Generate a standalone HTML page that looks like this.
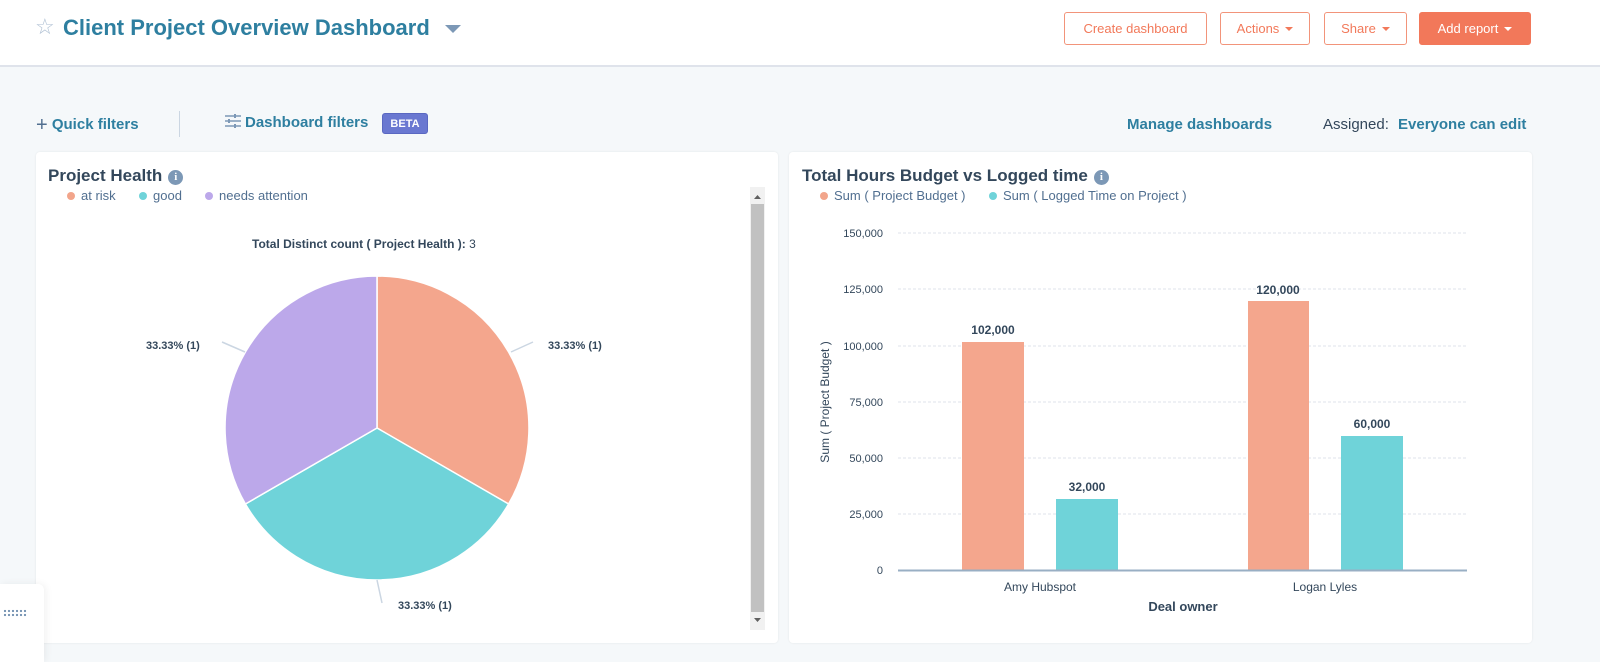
<!DOCTYPE html>
<html><head><style>
*{box-sizing:border-box;margin:0;padding:0}
body{width:1600px;height:662px;overflow:hidden;background:#f5f8fa;font-family:"Liberation Sans",sans-serif;position:relative;color:#33475b}
.hdr{position:absolute;left:0;top:0;width:1600px;height:67px;background:#fff;border-bottom:2px solid #dfe3eb}
.abs{position:absolute}
.btn{position:absolute;top:12px;height:33px;border:1px solid #f2947a;border-radius:3px;color:#f2795a;font-size:13px;display:flex;align-items:center;justify-content:center;background:#fff}
.car{display:inline-block;width:0;height:0;border-left:4px solid transparent;border-right:4px solid transparent;border-top:4px solid currentColor;margin-left:6px}
.link{color:#2e7fa0;font-weight:bold;font-size:15px}
.card{position:absolute;top:152px;height:491px;background:#fff;border-radius:4px;box-shadow:0 0 2px rgba(0,0,0,.08)}
.title{position:absolute;font-size:17px;font-weight:bold;color:#33475b}
.info{display:inline-block;width:15px;height:15px;border-radius:50%;background:#7c98b6;color:#fff;font-size:11px;font-weight:bold;text-align:center;line-height:15px;vertical-align:1px;margin-left:6px;font-family:"Liberation Serif",serif}
.leg{position:absolute;font-size:13px;color:#516f90}
.dot{display:inline-block;width:8px;height:8px;border-radius:50%;margin-right:6px}
</style></head><body>
<div class="hdr"></div>
<div class="abs" style="left:35px;top:14px;font-size:22px;color:#b0c1d4">☆</div>
<div class="abs" style="left:63px;top:15px;font-size:22px;font-weight:bold;color:#2e7fa0">Client Project Overview Dashboard</div>
<div class="abs" style="left:445px;top:25px;border-left:8px solid transparent;border-right:8px solid transparent;border-top:8px solid #7c98b6"></div>
<div class="btn" style="left:1064px;width:143px">Create dashboard</div>
<div class="btn" style="left:1220px;width:90px">Actions<span class="car"></span></div>
<div class="btn" style="left:1324px;width:83px">Share<span class="car"></span></div>
<div class="btn" style="left:1419px;width:112px;background:#f2785a;border-color:#f2785a;color:#fff">Add report<span class="car"></span></div>

<div class="abs link" style="left:36px;top:114px"><span style="font-weight:normal;font-size:20px;color:#516f90;vertical-align:-2px">+</span> Quick filters</div>
<div class="abs" style="left:179px;top:111px;width:1px;height:26px;background:#cbd6e2"></div>
<div class="abs link" style="left:225px;top:114px"><svg width="16" height="14" style="vertical-align:-1px;margin-right:4px"><g stroke="#7c98b6" stroke-width="1.5"><line x1="0" y1="2" x2="16" y2="2"/><line x1="0" y1="7" x2="16" y2="7"/><line x1="0" y1="12" x2="16" y2="12"/></g><g fill="#7c98b6"><rect x="9" y="0" width="2" height="4"/><rect x="3" y="5" width="2" height="4"/><rect x="9" y="10" width="2" height="4"/></g></svg>Dashboard filters</div>
<div class="abs" style="left:382px;top:113px;width:46px;height:21px;background:#6a78d1;border-radius:3px;color:#fff;font-size:11px;font-weight:bold;text-align:center;line-height:21px;border:1px solid #5a68c1">BETA</div>
<div class="abs link" style="left:1127px;top:116px">Manage dashboards</div>
<div class="abs" style="left:1323px;top:116px;font-size:15px;color:#33475b">Assigned:</div>
<div class="abs link" style="left:1398px;top:116px">Everyone can edit</div>

<div class="card" style="left:36px;width:742px"></div>
<div class="title" style="left:48px;top:166px">Project Health<span class="info">i</span></div>
<div class="leg" style="left:67px;top:188px"><span class="dot" style="background:#f2a58b"></span>at risk</div>
<div class="leg" style="left:139px;top:188px"><span class="dot" style="background:#6fd3d9"></span>good</div>
<div class="leg" style="left:205px;top:188px"><span class="dot" style="background:#bca8ea"></span>needs attention</div>
<div class="abs" style="left:252px;top:237px;font-size:12px;color:#33475b"><b>Total Distinct count ( Project Health ):</b> 3</div>
<svg class="abs" style="left:0;top:0" width="780" height="662">
<path d="M377 428 L377 276 A152 152 0 0 1 508.6 504 Z" fill="#f4a68d" stroke="#fff" stroke-width="1.5"/>
<path d="M377 428 L508.6 504 A152 152 0 0 1 245.4 504 Z" fill="#6fd3d9" stroke="#fff" stroke-width="1.5"/>
<path d="M377 428 L245.4 504 A152 152 0 0 1 377 276 Z" fill="#bca8ea" stroke="#fff" stroke-width="1.5"/>
<g stroke="#cbd6e2" stroke-width="1.5" fill="none"><path d="M511 352 L533 342"/><path d="M245 352 L222 342"/><path d="M377 580 L382 603"/></g>
<g font-size="11" font-weight="bold" fill="#33475b" font-family="Liberation Sans"><text x="548" y="349">33.33% (1)</text><text x="146" y="349">33.33% (1)</text><text x="398" y="609">33.33% (1)</text></g>
<rect x="750" y="187" width="15" height="443" fill="#f1f1f1"/><rect x="751" y="204" width="13" height="408" fill="#c1c1c1"/>
<path d="M754 199 L761 199 L757.5 195Z M754 618 L761 618 L757.5 622Z" fill="#606060"/>
</svg>
<div class="abs" style="left:0;top:584px;width:44px;height:78px;background:#fff;border-radius:0 6px 0 0;box-shadow:2px 0 8px rgba(0,0,0,.06)"></div>
<div class="abs" style="left:3px;top:609px;width:24px;height:8px;background:radial-gradient(circle,#7c98b6 1.1px,transparent 1.3px) 0 0/4px 4px"></div>

<div class="card" style="left:789px;width:743px"></div>
<div class="title" style="left:802px;top:166px">Total Hours Budget vs Logged time<span class="info">i</span></div>
<div class="leg" style="left:820px;top:188px"><span class="dot" style="background:#f2a58b"></span>Sum ( Project Budget )</div>
<div class="leg" style="left:989px;top:188px"><span class="dot" style="background:#6fd3d9"></span>Sum ( Logged Time on Project )</div>
<svg class="abs" style="left:789px;top:152px" width="743" height="491" font-family="Liberation Sans">
<g transform="translate(-789,-152)">
<g stroke="#dfe3eb" stroke-dasharray="3,2"><line x1="898" y1="233" x2="1467" y2="233"/><line x1="898" y1="289" x2="1467" y2="289"/><line x1="898" y1="346" x2="1467" y2="346"/><line x1="898" y1="402" x2="1467" y2="402"/><line x1="898" y1="458" x2="1467" y2="458"/><line x1="898" y1="514" x2="1467" y2="514"/></g>
<g font-size="11" fill="#33475b" text-anchor="end"><text x="883" y="237">150,000</text><text x="883" y="293">125,000</text><text x="883" y="350">100,000</text><text x="883" y="406">75,000</text><text x="883" y="462">50,000</text><text x="883" y="518">25,000</text><text x="883" y="574">0</text></g>
<rect x="962" y="342" width="62" height="228" fill="#f4a68d"/>
<rect x="1056" y="499" width="62" height="71" fill="#6fd3d9"/>
<rect x="1248" y="301" width="61" height="269" fill="#f4a68d"/>
<rect x="1341" y="436" width="62" height="134" fill="#6fd3d9"/>
<line x1="898" y1="570.5" x2="1467" y2="570.5" stroke="#99afc4" stroke-width="2"/>
<g font-size="12" font-weight="bold" fill="#33475b" text-anchor="middle"><text x="993" y="334">102,000</text><text x="1087" y="491">32,000</text><text x="1278" y="294">120,000</text><text x="1372" y="428">60,000</text></g>
<g font-size="12" fill="#33475b" text-anchor="middle"><text x="1040" y="591">Amy Hubspot</text><text x="1325" y="591">Logan Lyles</text><text x="1183" y="611" font-weight="bold" font-size="13">Deal owner</text>
<text transform="translate(829,402) rotate(-90)" font-size="12">Sum ( Project Budget )</text></g>
</g></svg>
</body></html>
